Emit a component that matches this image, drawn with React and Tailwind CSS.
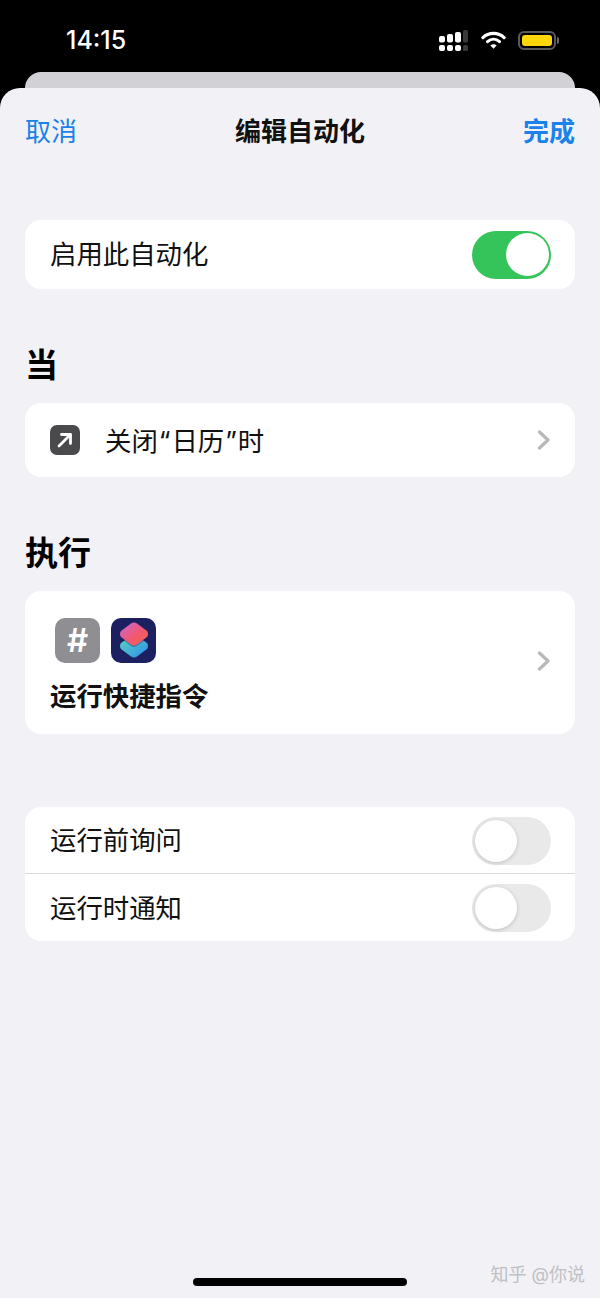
const FONT = "font-['Inter','Noto_Sans_CJK_SC',sans-serif]";

function Toggle({ on }) {
    if (on) {
        return (
            <div className="w-[79px] h-[48px] rounded-full bg-[#35c45a] flex justify-end items-center pr-[2px]">
                <div className="w-[43px] h-[43px] rounded-full bg-white" />
            </div>
        );
    }
    return (
        <div className="w-[79px] h-[48px] rounded-full bg-[#e9e9ea] flex items-center pl-[3px]">
            <div className="w-[42px] h-[42px] rounded-full bg-white shadow-[0_1px_4px_rgba(0,0,0,0.18)]" />
        </div>
    );
}

function Chevron() {
    return (
        <svg width="14" height="20" viewBox="0 0 14 20" fill="none">
            <path d="M2.5 2 L11 10 L2.5 18" stroke="#b8b8bc" strokeWidth="3.2" strokeLinecap="round" strokeLinejoin="round" />
        </svg>
    );
}

function StatusIcons() {
    return (
        <div className="flex items-center">
            <svg width="30" height="21" viewBox="0 0 30 21" fill="white">
                <rect x="0" y="6" width="6" height="6.5" rx="2" />
                <rect x="0" y="15" width="6" height="6" rx="2" />
                <rect x="8" y="4" width="6" height="8.5" rx="2" />
                <rect x="8" y="15" width="6" height="6" rx="2" />
                <rect x="16" y="2" width="6" height="10.5" rx="2" />
                <rect x="16" y="15" width="6" height="6" rx="2" />
                <rect x="24" y="0" width="5" height="12.5" rx="1.5" fill="#3a3a3a" />
                <rect x="24" y="15" width="5" height="6" rx="1.5" fill="#3a3a3a" />
            </svg>
            <svg className="ml-[12px]" width="25" height="20" viewBox="0 0 26 20" fill="none" stroke="white" strokeLinecap="round">
                <path d="M2 7.5 C8 1.8 18 1.8 24 7.5" strokeWidth="3.4" />
                <path d="M6.8 11.8 C10.5 8.4 15.5 8.4 19.2 11.8" strokeWidth="3.2" />
                <path d="M13 19 L9.8 15.6 C11.6 14.1 14.4 14.1 16.2 15.6 Z" fill="white" strokeWidth="0" />
            </svg>
            <div className="ml-[12px] w-[38px] h-[19px] rounded-[6px] border-2 border-[#5a5a5a] p-[2px]">
                <div className="w-full h-full rounded-[3px] bg-[#ffd60a]" />
            </div>
            <div className="ml-[1px] w-[2px] h-[7px] rounded-r-full bg-[#6a6a6a]" />
        </div>
    );
}

function ShortcutsIcon() {
    return (
        <div className="w-[45px] h-[45px] rounded-[10px] bg-[#1c2060] flex items-center justify-center">
            <svg width="30" height="36" viewBox="0 0 30 36">
                <defs>
                    <linearGradient id="topLayer" x1="0" y1="0" x2="1" y2="1">
                        <stop offset="0" stopColor="#c96ad8" />
                        <stop offset="0.55" stopColor="#f2586f" />
                        <stop offset="1" stopColor="#f8604f" />
                    </linearGradient>
                    <linearGradient id="lowLayer" x1="0" y1="0" x2="1" y2="1">
                        <stop offset="0" stopColor="#5fd6b8" />
                        <stop offset="1" stopColor="#2b8ff0" />
                    </linearGradient>
                </defs>
                <path d="M12 14 Q15 12 18 14 L28 21 Q30 24 28 27 L18 34.5 Q15 36.5 12 34.5 L2 27 Q0 24 2 21 Z" fill="url(#lowLayer)" />
                <path d="M12 1.5 Q15 -0.5 18 1.5 L28 9 Q30 12 28 15 L18 22.5 Q15 24.5 12 22.5 L2 15 Q0 12 2 9 Z" fill="#1c2060" opacity="0.35" transform="translate(0 1.5)" />
                <path d="M12 1.5 Q15 -0.5 18 1.5 L28 9 Q30 12 28 15 L18 22.5 Q15 24.5 12 22.5 L2 15 Q0 12 2 9 Z" fill="url(#topLayer)" />
            </svg>
        </div>
    );
}

export default function App() {
    return (
        <div className={`w-[600px] h-[1298px] bg-black flex flex-col overflow-hidden ${FONT}`}>
            <div className="h-[72px] shrink-0 pl-[66px] pr-[41px] pt-[8px] flex items-center justify-between text-white">
                <span className="pt-[2px] text-[25px] font-medium font-['Inter',sans-serif]">14:15</span>
                <StatusIcons />
            </div>

            <div className="h-[16px] shrink-0 mx-[25px] rounded-t-[16px] bg-[#d1d1d6]" />

            <div className="flex-1 bg-[#f1f1f6] rounded-t-[20px] px-[25px] flex flex-col">
                <div className="h-[86px] shrink-0 pt-[2px] flex items-center justify-between text-[26px] leading-none">
                    <span className="text-[#1a82e8]">取消</span>
                    <span className="font-semibold text-[#111]">编辑自动化</span>
                    <span className="font-semibold text-[#1a82e8]">完成</span>
                </div>

                <div className="mt-[46px] h-[69px] bg-white rounded-[16px] px-[25px] flex items-center justify-between">
                    <span className="text-[26.4px] leading-none text-[#111]">启用此自动化</span>
                    <div className="mr-[-1px]">
                        <Toggle on />
                    </div>
                </div>

                <div className="mt-[58px] text-[33px] leading-[36px] font-bold text-black">当</div>

                <div className="mt-[20px] h-[74px] bg-white rounded-[16px] pl-[25px] pr-[24px] flex items-center">
                    <div className="w-[30px] h-[30px] rounded-[7px] bg-[#4a4a4c] flex items-center justify-center">
                        <svg width="18" height="18" viewBox="0 0 18 18" fill="none" stroke="white" strokeWidth="2.8" strokeLinecap="round" strokeLinejoin="round">
                            <path d="M3 15 L14 4" />
                            <path d="M5.5 3.5 H14.5 V12.5" />
                        </svg>
                    </div>
                    <span className="ml-[25px] pt-[2px] text-[26.4px] leading-none text-[#111]">
                        关闭<span className="px-[1px]">“</span>日历<span className="px-[1px]">”</span>时
                    </span>
                    <div className="ml-auto">
                        <Chevron />
                    </div>
                </div>

                <div className="mt-[58px] text-[33px] leading-[36px] font-bold text-black">执行</div>

                <div className="mt-[20px] h-[143px] bg-white rounded-[16px] pl-[25px] pr-[24px] flex items-center justify-between">
                    <div className="flex flex-col pt-[2px]">
                        <div className="ml-[5px] flex gap-[11px]">
                            <div className="w-[45px] h-[45px] rounded-[10px] bg-[#8e8e93] flex items-center justify-center text-white text-[33px] font-semibold leading-none">
                                #
                            </div>
                            <ShortcutsIcon />
                        </div>
                        <span className="mt-[20px] text-[26.4px] leading-none font-semibold text-[#111]">运行快捷指令</span>
                    </div>
                    <div className="mb-[3px]">
                        <Chevron />
                    </div>
                </div>

                <div className="mt-[73px] bg-white rounded-[16px] flex flex-col">
                    <div className="h-[67px] pl-[25px] pr-[24px] pt-[1px] flex items-center justify-between border-b border-[#d9d9dc]">
                        <span className="text-[26.4px] leading-none text-[#111]">运行前询问</span>
                        <Toggle />
                    </div>
                    <div className="h-[67px] pl-[25px] pr-[24px] flex items-center justify-between">
                        <span className="pt-[2px] text-[26.4px] leading-none text-[#111]">运行时通知</span>
                        <Toggle />
                    </div>
                </div>

                <div className="mt-auto mb-[12px] relative flex justify-center">
                    <div className="w-[214px] h-[8px] rounded-full bg-black" />
                    <span className="absolute right-[-10px] bottom-[2px] text-[18px] leading-none text-[#c0c0c4]">知乎 @你说</span>
                </div>
            </div>
        </div>
    );
}
